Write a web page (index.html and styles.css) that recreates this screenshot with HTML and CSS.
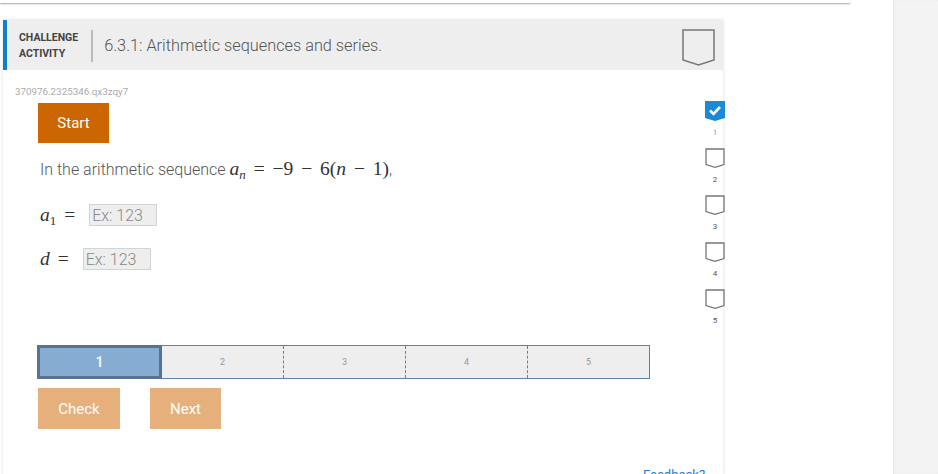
FILE: index.html
```html
<!DOCTYPE html>
<html lang="en">
<head>
    <meta charset="UTF-8">
    <title>Challenge Activity 6.3.1</title>
    <link rel="stylesheet" href="styles.css">
</head>
<body>
    <div class="page">
        <div class="main">
            <div class="topbar"></div>

            <div class="card">
                <div class="card-header">
                    <div class="kind">CHALLENGE<br>ACTIVITY</div>
                    <div class="title">6.3.1: Arithmetic sequences and series.</div>
                    <svg class="header-mark" width="33" height="37" viewBox="0 0 33 37">
                        <path d="M1 1H32V31L16.5 36L1 31Z" fill="none" stroke="#777" stroke-width="1.5"/>
                    </svg>
                </div>

                <div class="card-body">
                    <div class="content">
                        <div class="qid">370976.2325346.qx3zqy7</div>
                        <button class="btn start">Start</button>

                        <p class="prompt">
                            In the arithmetic sequence
                            <span class="math"><i>a</i><sub><i>n</i></sub> <span class="op">=</span> &minus;9 <span class="op">&minus;</span> 6(<i>n</i> <span class="op">&minus;</span> 1)</span>,
                        </p>

                        <div class="answer first">
                            <span class="math"><i>a</i><sub>1</sub> <span class="op">=</span></span>
                            <input type="text" placeholder="Ex: 123">
                        </div>
                        <div class="answer">
                            <span class="math"><i>d</i> <span class="op">=</span></span>
                            <input type="text" placeholder="Ex: 123">
                        </div>

                        <div class="progress">
                            <div class="step current">1</div>
                            <div class="step">2</div>
                            <div class="step">3</div>
                            <div class="step">4</div>
                            <div class="step">5</div>
                        </div>

                        <div class="actions">
                            <button class="btn light check">Check</button>
                            <button class="btn light next">Next</button>
                        </div>

                        <div class="feedback">Feedback?</div>
                    </div>

                    <div class="levels">
                        <div class="level">
                            <svg width="20" height="20" viewBox="0 0 20 20">
                                <path d="M0 0H20V17L10 20L0 17Z" fill="#1a8ad6"/>
                                <path d="M5 9.5L8.5 13L15 6" fill="none" stroke="#fff" stroke-width="2.6"/>
                            </svg>
                            <span class="done">1</span>
                        </div>
                        <div class="level">
                            <svg width="20" height="20" viewBox="0 0 20 20">
                                <path d="M1 1H19V16.5L10 19.3L1 16.5Z" fill="none" stroke="#777" stroke-width="1.3"/>
                            </svg>
                            <span>2</span>
                        </div>
                        <div class="level">
                            <svg width="20" height="20" viewBox="0 0 20 20">
                                <path d="M1 1H19V16.5L10 19.3L1 16.5Z" fill="none" stroke="#777" stroke-width="1.3"/>
                            </svg>
                            <span>3</span>
                        </div>
                        <div class="level">
                            <svg width="20" height="20" viewBox="0 0 20 20">
                                <path d="M1 1H19V16.5L10 19.3L1 16.5Z" fill="none" stroke="#777" stroke-width="1.3"/>
                            </svg>
                            <span>4</span>
                        </div>
                        <div class="level">
                            <svg width="20" height="20" viewBox="0 0 20 20">
                                <path d="M1 1H19V16.5L10 19.3L1 16.5Z" fill="none" stroke="#777" stroke-width="1.3"/>
                            </svg>
                            <span>5</span>
                        </div>
                    </div>
                </div>
            </div>
        </div>

        <div class="aside"></div>
    </div>
</body>
</html>
```

FILE: styles.css
```css
body {
    margin: 0;
    padding: 0;
    font-family: Roboto, "Liberation Sans", Arial, sans-serif;
    background: #fff;
    overflow: hidden;
}
.page {
    display: flex;
    height: 474px;
}
.main {
    width: 893px;
}
.aside {
    flex: 1;
    background: #f3f3f3;
    box-shadow: inset 1px 0 2px rgba(0, 0, 0, 0.06);
}
.topbar {
    width: 850px;
    height: 3px;
    background: #fff;
    box-shadow: 0 1px 2px rgba(0, 0, 0, 0.35);
}

.card {
    width: 720px;
    height: 460px;
    margin: 17px 0 0 3px;
    background: #fff;
    box-shadow: 0 0 3px rgba(0, 0, 0, 0.15);
}
.card-header {
    display: flex;
    align-items: center;
    height: 50px;
    background: #eee;
    border-left: 4px solid #0f80d0;
    padding: 0 8px 0 12px;
}
.kind {
    font-size: 10.5px;
    font-weight: 700;
    line-height: 16px;
    color: #444;
    padding-right: 13px;
    margin-top: 1px;
}
.title {
    flex: 1;
    font-size: 16.3px;
    font-weight: 300;
    color: #555;
    border-left: 2px solid #bbb;
    padding-left: 11px;
    line-height: 32px;
    margin-top: 1px;
}
.header-mark {
    margin-top: 4px;
}

.card-body {
    display: flex;
}
.content {
    flex: 1;
    padding: 16px 0 0 12px;
}
.qid {
    font-size: 9.8px;
    line-height: 12px;
    color: #aaa;
}
.btn {
    border: none;
    color: #fff;
    font-family: Roboto, "Liberation Sans", Arial, sans-serif;
    font-size: 15px;
    padding: 0;
    cursor: pointer;
}
.start {
    display: block;
    width: 71px;
    height: 40px;
    margin: 5px 0 0 23px;
    background: #cc6600;
}
.prompt {
    margin: 14px 0 0 25px;
    font-size: 16px;
    font-weight: 300;
    line-height: 24px;
    color: #555;
}
.math {
    font-family: "Liberation Serif", "Times New Roman", serif;
    font-size: 19.5px;
    color: #333;
    font-weight: 400;
}
.math sub {
    font-size: 13px;
    vertical-align: -4px;
    line-height: 0;
}
.math .op {
    margin: 0 3px;
}
.answer {
    display: flex;
    align-items: center;
    height: 26px;
    margin: 18px 0 0 25px;
}
.answer.first {
    margin-top: 20px;
}
.answer input {
    width: 68px;
    height: 22px;
    box-sizing: border-box;
    margin-left: 11px;
    padding: 0 2px;
    border: 1px solid #cdd5db;
    background: #eee;
    font-family: Roboto, "Liberation Sans", Arial, sans-serif;
    font-size: 16px;
    font-weight: 300;
    color: #555;
}
.answer input::placeholder {
    color: #888;
}

.progress {
    display: flex;
    width: 613px;
    height: 34px;
    margin: 73px 0 0 22px;
    box-sizing: border-box;
    border: 1px solid #5b84ad;
    border-left: none;
    background: #eee;
}
.step {
    flex: 1;
    display: flex;
    align-items: center;
    justify-content: center;
    font-size: 9px;
    color: #999;
    border-left: 1px dashed #5b84ad;
}
.step.current {
    flex: 0 0 125px;
    box-sizing: border-box;
    margin: -1px 0;
    border: 3px solid #5a7196;
    background: #87acd2;
    color: #eef4fa;
    font-size: 14px;
    font-weight: 700;
}
.step.current + .step {
    border-left: none;
}

.actions {
    display: flex;
    gap: 30px;
    margin: 9px 0 0 23px;
}
.btn.light {
    height: 41px;
    background: #e6b07d;
}
.check {
    width: 82px;
}
.next {
    width: 71px;
}
.feedback {
    margin: 38px 0 0 628px;
    font-size: 13px;
    line-height: 16px;
    color: #1a7fcf;
}

.levels {
    width: 40px;
    margin-right: 6px;
    padding-top: 31px;
    display: flex;
    flex-direction: column;
    align-items: center;
}
.level {
    display: flex;
    flex-direction: column;
    align-items: center;
    margin-bottom: 9px;
}
.level span {
    margin-top: 6px;
    font-size: 8px;
    line-height: 12px;
    color: #555;
}
.level span.done {
    color: #8a9bbd;
}
```
